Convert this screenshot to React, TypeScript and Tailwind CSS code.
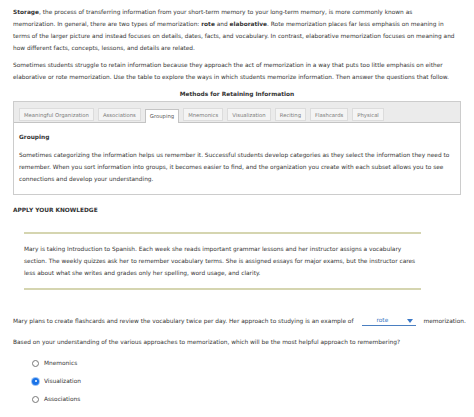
const tabs = [
  "Meaningful Organization",
  "Associations",
  "Grouping",
  "Mnemonics",
  "Visualization",
  "Reciting",
  "Flashcards",
  "Physical",
]

const options = ["Mnemonics", "Visualization", "Associations"]

export default function App() {
  const active = "Grouping"
  const selected = "Visualization"

  return (
    <main className="min-h-screen w-[474px] bg-white px-[13px] pt-[6px] font-['DejaVu_Sans',sans-serif] text-[5.85px] leading-[12px] text-[#333]">
      <p>
        <b>Storage</b>, the process of transferring information from your short-term memory to your long-term memory, is
        more commonly known as
        <br />
        memorization. In general, there are two types of memorization: <b>rote</b> and <b>elaborative</b>. Rote
        memorization places far less emphasis on meaning in terms of the larger picture and instead focuses on details,
        dates, facts, and vocabulary. In contrast, elaborative memorization focuses on meaning and how different facts,
        concepts, lessons, and details are related.
      </p>
      <p className="mt-[5px]">
        Sometimes students struggle to retain information because they approach the act of memorization in a way that puts
        too little emphasis on either elaborative or rote memorization. Use the table to explore the ways in which students
        memorize information. Then answer the questions that follow.
      </p>

      <h2 className="mt-[5px] text-center font-bold">Methods for Retaining Information</h2>

      <div className="mt-[1px] border border-[#ccc]">
        <div className="flex items-end gap-[4px] bg-[#ebebeb] px-[5px] pt-[6px]">
          {tabs.map((t) => (
            <div
              key={t}
              className={
                t === active
                  ? "-mb-px whitespace-nowrap border border-b-0 border-[#c4c4c4] bg-white px-[4px] pb-[2px] pt-[1px] text-[5.3px] leading-[10px] text-[#555]"
                  : "mb-[1px] whitespace-nowrap border border-[#dcdcdc] bg-[#f4f4f4] px-[4px] pt-[1px] text-[5.3px] leading-[10px] text-[#7a7a7a]"
              }
            >
              {t}
            </div>
          ))}
        </div>
        <div className="border-t border-[#c4c4c4] px-[5px] pb-[9px] pt-[8px]">
          <h3 className="font-bold">Grouping</h3>
          <p className="mt-[6px]">
            Sometimes categorizing the information helps us remember it. Successful students develop categories as they
            select the information they need to remember. When you sort information into groups, it becomes easier to find,
            and the organization you create with each subset allows you to see connections and develop your understanding.
          </p>
        </div>
      </div>

      <h2 className="mt-[9px] font-bold">APPLY YOUR KNOWLEDGE</h2>

      <div className="ml-[11px] mr-[40px] mt-[16px]">
        <div className="h-[2px] bg-[#d5d5b0]" />
        <p className="mt-[9px]">
          Mary is taking Introduction to Spanish. Each week she reads important grammar lessons and her instructor assigns a
          vocabulary section. The weekly quizzes ask her to remember vocabulary terms. She is assigned essays for major
          exams, but the instructor cares less about what she writes and grades only her spelling, word usage, and clarity.
        </p>
        <div className="mt-[9px] h-[2px] bg-[#d5d5b0]" />
      </div>

      <p className="mt-[25px] whitespace-nowrap">
        Mary plans to create flashcards and review the vocabulary twice per day. Her approach to studying is an example of
        <span className="mx-[8px] inline-flex w-[54px] items-center justify-between border-b border-[#4a7fc1] pl-[15px] pr-[3px] align-middle leading-[9px] text-[#2f6fc0]">
          rote
          <svg width="6" height="4" viewBox="0 0 6 4">
            <path d="M0 0 L6 0 L3 4 Z" fill="#3b78c7" />
          </svg>
        </span>
        memorization.
      </p>

      <p className="mt-[9px]">
        Based on your understanding of the various approaches to memorization, which will be the most helpful approach to
        remembering?
      </p>

      <div className="mt-[9px] flex flex-col gap-[6px] pl-[19px]">
        {options.map((o) => (
          <label key={o} className="flex items-center gap-[5px]">
            {o === selected ? (
              <span className="flex h-[7px] w-[7px] items-center justify-center rounded-full bg-[#1a73e8] ring-1 ring-[#9cc3f5]">
                <span className="h-[2px] w-[2px] rounded-full bg-white" />
              </span>
            ) : (
              <span className="h-[7px] w-[7px] rounded-full border border-[#777] bg-white" />
            )}
            <span>{o}</span>
          </label>
        ))}
      </div>
    </main>
  )
}
